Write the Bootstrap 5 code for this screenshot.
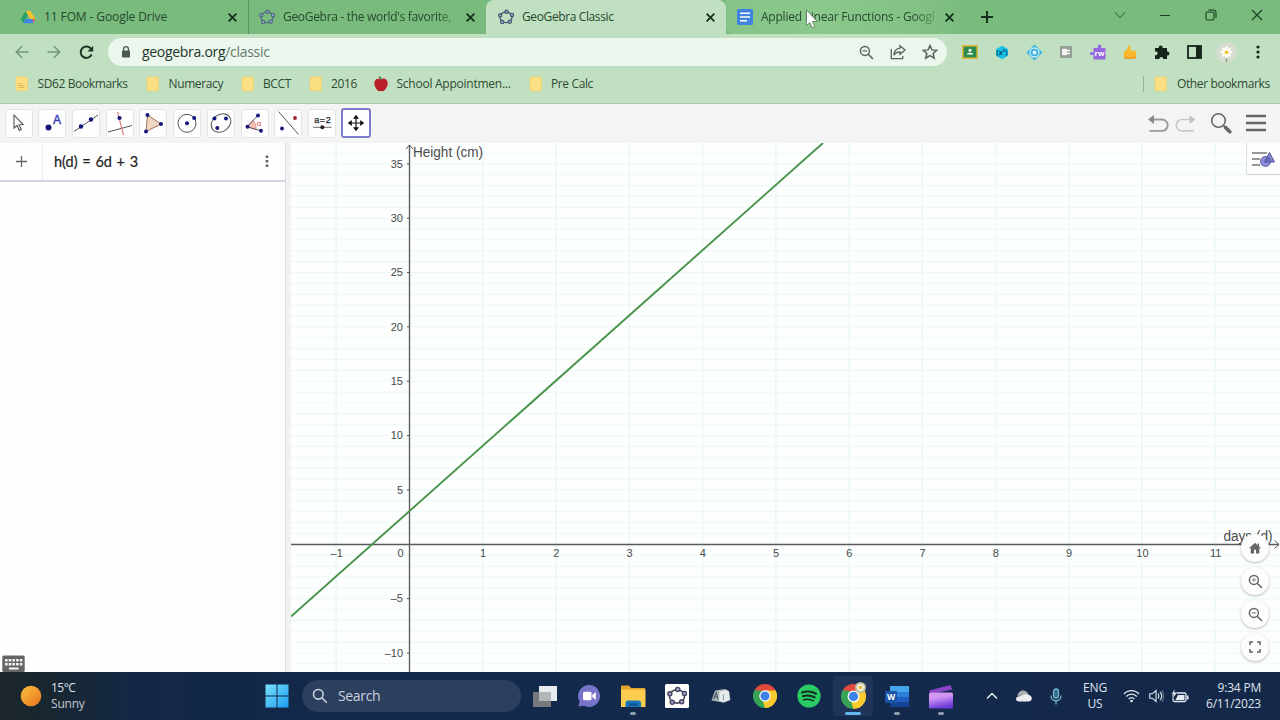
<!DOCTYPE html>
<html lang="en">
<head>
<meta charset="utf-8">
<meta name="viewport" content="width=device-width, initial-scale=1">
<title>GeoGebra Classic</title>
<link href="https://cdn.jsdelivr.net/npm/bootstrap@5.3.0/dist/css/bootstrap.min.css" rel="stylesheet">
<style>
body{width:1280px;height:720px;overflow:hidden;font-family:"Open Sans","Noto Sans",sans-serif;font-size:12px;line-height:16px;color:#2f4a36;background:#fdfefe}
svg{display:block;flex:none}
.tabstrip{height:34px;background:#78bb7c;padding-left:8px}
.tab{height:34px;padding:0 10px 0 12px;flex:none;color:#27492f}
.tab .ttl{flex:1;margin-left:8px;white-space:nowrap;letter-spacing:-.38px}
.tab .ttl.first{letter-spacing:-.1px}
.tab .ttl.long{letter-spacing:-.31px}
.tab .ttl.docs{letter-spacing:-.22px}
.t1{width:240px}.t2{width:238px;border-left:1px solid #5c9763}
.t3{width:240px;background:#c1e0c1;border-radius:8px 8px 0 0}
.t4{width:239px;background:linear-gradient(90deg,#85c487,#8bc88c 40%,#7fc082 90%,#78bb7c);border-radius:0 0 0 8px;padding-left:11px}
.fade-r{-webkit-mask-image:linear-gradient(90deg,#000 88%,rgba(0,0,0,.35) 98%);mask-image:linear-gradient(90deg,#000 88%,rgba(0,0,0,.35) 98%)}
.slot{flex:none;display:flex;align-items:center;justify-content:center}
.w32{width:32px}
.addressbar{height:36px;background:#c1e0c1;padding:0 6px}
.omni{width:839px;height:28px;border-radius:14px;background:#ebf6ed;margin-left:6px;margin-right:7px;padding-left:11px;font-size:14px;letter-spacing:-.3px;color:#63786a}
.omni b{font-weight:400;color:#22352a}
.bookmarks{height:33px;background:#c1e0c1;padding:0 10px 0 14px}
.bm{flex:none;gap:7.5px;height:28px;white-space:nowrap;letter-spacing:-.38px}
.ggbar{height:40px;background:#f4f4f4;border-top:1px solid #a9c8aa;padding:0 0 1px 4.5px}
.tool{width:28px;height:29px;background:#fefefe;border:1px solid #e4e4e6;border-radius:3px;margin-right:5.72px}
.tool.on{width:30px;height:30px;border:2px solid #7f7dcb;margin-left:-.5px}
.work{height:529px}
.alg{width:286px;background:#fefefe;border-right:1px solid #dcdcdc}
.algrow{height:39px;border-bottom:2px solid #d4d2e4}
.pluscell{width:43px;border-right:1px solid #ebebee;height:37px}
.formula{font-family:Lato,"Open Sans",sans-serif;font-size:14.5px;word-spacing:1px;color:#222;-webkit-text-stroke:.2px #222}
.split{width:5px;background:#f1f1f1}
.plot{width:989px;height:529px;overflow:hidden}
.plot text{font-family:"Liberation Sans",Arial,sans-serif;font-size:11px;fill:#4a4a4a}
.plot text.axis{font-size:14px;fill:#4c4c4c}
.stylebtn{position:absolute;right:0;top:0;width:34px;height:32px;background:#fdfdfd;border-left:1px solid #ddd;border-bottom:1px solid #ccc;border-radius:0 0 0 3px}
.views{position:absolute;right:11px;top:391px;gap:5px}
.rnd{width:28px;height:28px;border-radius:50%;background:#fdfdfd;box-shadow:0 1px 2.5px rgba(0,0,0,.28)}
.kbd{position:absolute;left:2px;bottom:0}
.taskbar{height:48px;background:linear-gradient(90deg,#1d252a 0,#18262f 45px,#142845 130px,#122849 250px,#132a4d 560px,#142849 100%);color:#dfe5ee}
.tight{letter-spacing:-.2px}
.srch{width:219px;height:32px;border-radius:16px;background:#2c3f5f;font-size:14px;letter-spacing:-.35px;color:#ccd3df;padding-left:10px;gap:10px}
.app{width:44px;height:48px;position:relative;flex:none}
.app.run:after{content:"";position:absolute;left:19px;bottom:5px;width:6px;height:3px;border-radius:2px;background:#8f9bae}
.app.cur:before{content:"";position:absolute;left:2px;top:4px;width:40px;height:40px;border-radius:4px;background:#20345a}
.app.cur:after{content:"";position:absolute;left:14px;bottom:5px;width:16px;height:3px;border-radius:2px;background:#64b5ee}
.app svg{position:relative}
.pointer{position:absolute;left:805px;top:9px}
</style>
</head>
<body>
<svg width="0" height="0" class="position-absolute">
<defs>
<symbol id="geo" viewBox="0 0 24 24"><ellipse cx="12" cy="12.5" rx="9" ry="8" fill="none" stroke="currentColor" stroke-width="1.9"/><g fill="#9b9fce" stroke="currentColor" stroke-width="1.6"><circle cx="12.8" cy="4.2" r="2.5"/><circle cx="21" cy="9" r="2.5"/><circle cx="17.6" cy="19" r="2.5"/><circle cx="6.3" cy="19.6" r="2.5"/><circle cx="3.4" cy="9.4" r="2.5"/></g></symbol>
<symbol id="x" viewBox="0 0 10 10"><path d="M1.5 1.5 8.5 8.5M8.5 1.5 1.5 8.5" stroke="#14301c" stroke-width="1.7"/></symbol>
<symbol id="folder" viewBox="0 0 16 16"><path d="M3 1h9.500a1 1 0 0 1 1 1v9.300l-.8.6.8.7v1.200a1 1 0 0 1-1 1H3a1 1 0 0 1-1-1V2a1 1 0 0 1 1-1z" fill="#fbdf83" stroke="#efcd6a" stroke-width=".7"/></symbol>
<symbol id="chrome" viewBox="0 0 24 24"><path d="M12 12 1.600 6A12 12 0 0 1 22.400 6z" fill="#df4a3d"/><path d="M12 12 22.400 6A12 12 0 0 1 12 24z" fill="#fbcb2e"/><path d="M12 12v12A12 12 0 0 1 1.600 6z" fill="#35a353"/><path d="M12 6.300h10.600L17 15z" fill="#fbcb2e"/><path d="M12 6.300h10.600L22.300 6 12 4z" fill="#df4a3d"/><path d="m17 15-5 9-2-6z" fill="#fbcb2e"/><path d="M7 15 1.600 6 9 7z" fill="#35a353"/><circle cx="12" cy="12" r="5.700" fill="#fff"/><circle cx="12" cy="12" r="4.500" fill="#3e82e8"/></symbol>
<symbol id="mag" viewBox="0 0 16 16"><g fill="none" stroke="currentColor" stroke-width="1.600"><circle cx="6.300" cy="6.300" r="4.800"/><path d="m9.800 9.800 5 5"/></g></symbol>
</defs>
</svg>

<header>
<div class="tabstrip d-flex align-items-center position-relative">
  <div class="tab t1 d-flex align-items-center">
    <svg width="16" height="16" viewBox="0 0 16 16"><path d="M5.500 2h5L8 6.300 3.200 14 .7 9.900z" fill="#25a266"/><path d="M5.500 2h5l4.900 8h-5z" fill="#fbc22c"/><path d="M3.200 14.300 5.600 10h9.800L13 14.300z" fill="#4286ec"/><path d="M12.700 10h2.700L13 14.300z" fill="#de6047"/></svg>
    <span class="ttl first">11 FOM - Google Drive</span><svg width="11" height="11"><use href="#x"/></svg>
  </div>
  <div class="tab t2 d-flex align-items-center">
    <svg width="16" height="16" style="color:#4a6c80;margin-left:-2px"><use href="#geo"/></svg>
    <span class="ttl long fade-r me-2">GeoGebra - the world's favorite,</span><svg width="11" height="11"><use href="#x"/></svg>
  </div>
  <div class="tab t3 d-flex align-items-center">
    <svg width="16" height="16" style="color:#45556c"><use href="#geo"/></svg>
    <span class="ttl">GeoGebra Classic</span><svg width="11" height="11"><use href="#x"/></svg>
  </div>
  <div class="tab t4 d-flex align-items-center">
    <svg width="16" height="16" viewBox="0 0 16 16"><rect width="16" height="16" rx="1.500" fill="#4083df"/><path d="M3 4.200h10M3 8h10M3 11.800h7" stroke="#fff" stroke-width="1.500"/></svg>
    <span class="ttl docs fade-r me-2">Applied Linear Functions - Googl</span><svg width="11" height="11"><use href="#x"/></svg>
  </div>
  <span class="slot" style="width:44px"><svg width="12" height="12" viewBox="0 0 12 12"><path d="M6 0v12M0 6h12" stroke="#12301a" stroke-width="2"/></svg></span>
  <div class="ms-auto d-flex pb-1">
    <span class="slot" style="width:45px"><svg width="12" height="12" viewBox="0 0 12 12" fill="none" stroke="#2e5737"><path d="m1 3.500 5 5 5-5"/></svg></span>
    <span class="slot" style="width:46px"><svg width="12" height="12" viewBox="0 0 12 12"><path d="M1 6.500h10" stroke="#173a20"/></svg></span>
    <span class="slot" style="width:46px"><svg width="12" height="12" viewBox="0 0 12 12" fill="none" stroke="#173a20" stroke-width="1.100"><rect x="1" y="3" width="8" height="8" rx="1.500"/><path d="M3.300 1h5.200a2.500 2.500 0 0 1 2.500 2.500v5.200"/></svg></span>
    <span class="slot" style="width:46px"><svg width="12" height="12" viewBox="0 0 12 12"><path d="m1 1 10 10M11 1 1 11" stroke="#173a20" stroke-width="1.100"/></svg></span>
  </div>
  <svg class="pointer" width="14" height="20" viewBox="0 0 14 20"><path d="M1.500 1v15.500l3.400-3 2.300 5.300 2.500-1.100-2.300-5.200h4.900z" fill="#fff" stroke="#54785a" stroke-width=".8"/></svg>
</div>

<div class="addressbar d-flex align-items-center">
  <span class="slot w32"><svg width="14" height="14" viewBox="0 0 14 14" fill="none" stroke="#71967a" stroke-width="1.500"><path d="M13.500 7H1.500M7 1.300 1.300 7 7 12.700"/></svg></span>
  <span class="slot w32"><svg width="14" height="14" viewBox="0 0 14 14" fill="none" stroke="#71967a" stroke-width="1.500"><path d="M.5 7h12M7 1.300 12.700 7 7 12.700"/></svg></span>
  <span class="slot w32"><svg width="15" height="15" viewBox="0 0 15 15"><path d="M12.600 9.500A5.700 5.700 0 1 1 12 3.800" fill="none" stroke="#1d3525" stroke-width="2"/><path d="M14.200.8V6.500H8.500z" fill="#1d3525"/></svg></span>
  <div class="omni d-flex align-items-center">
    <svg width="14" height="14" viewBox="0 0 14 14"><rect x="3" y="5.500" width="8" height="7" rx=".8" fill="#4b5a51"/><path d="M4.600 6V4a2.400 2.400 0 0 1 4.800 0v2" fill="none" stroke="#4b5a51" stroke-width="1.300"/></svg>
    <span style="margin-left:9px"><b>geogebra.org</b>/classic</span>
    <div class="ms-auto d-flex" style="margin-right:1px;color:#55645b">
      <span class="slot w32"><svg width="15" height="15" viewBox="0 0 16 16"><use href="#mag"/><path d="M4 6.300h4.600" stroke="currentColor" stroke-width="1.300"/></svg></span>
      <span class="slot w32"><svg width="16" height="16" viewBox="0 0 16 16" fill="none" stroke="currentColor" stroke-width="1.300"><path d="M1.300 5v9.700h11.400V12"/><path d="M10 1.700 15 6l-5 4.300V8C6.800 8 5 9 3.800 11.300 4.100 7.300 6 4.500 10 4.100z"/></svg></span>
      <span class="slot w32"><svg width="16" height="16" viewBox="0 0 16 16" fill="none" stroke="currentColor" stroke-width="1.500"><path d="m8 1.500 1.900 4.400 4.800.4-3.600 3.200 1.100 4.700L8 11.700l-4.200 2.500 1.100-4.700L1.300 6.300l4.800-.4z"/></svg></span>
    </div>
  </div>
  <span class="slot w32"><svg width="16" height="16" viewBox="0 0 16 16"><rect x=".8" y="1.800" width="14.400" height="12.400" fill="#2d8a4e" stroke="#dbb83a" stroke-width="1.600"/><circle cx="8" cy="6.300" r="1.500" fill="#fff"/><path d="M4.500 10.500c1-2.300 6-2.300 7 0z" fill="#fff"/></svg></span>
  <span class="slot w32"><svg width="14" height="15" viewBox="0 0 14 15"><path d="m7 .8 6 3.400v6.600l-6 3.400-6-3.400V4.200z" fill="#16bfe6"/><text x="7" y="10" font-size="7" font-weight="700" fill="#0b4c72" text-anchor="middle">(x²)</text></svg></span>
  <span class="slot w32"><svg width="17" height="17" viewBox="0 0 17 17"><path d="m8.500.5 8 8-8 8-8-8z" fill="#3cb1e0"/><circle cx="8.500" cy="8.500" r="4.500" fill="none" stroke="#c6ecfa" stroke-width="1.300"/><circle cx="8.500" cy="8.500" r="2" fill="#e2f8ff"/></svg></span>
  <span class="slot w32"><svg width="12" height="12" viewBox="0 0 12 12"><rect width="12" height="12" rx="1" fill="#94a096"/><rect x="2" y="2.800" width="5" height="6.400" rx="1" fill="#f6f6f6"/><path d="M7 4.500h3M7 7.500h3" stroke="#fff" stroke-width="1.300"/></svg></span>
  <span class="slot w32"><svg width="18" height="18" viewBox="0 0 18 18"><path d="M4.500 5H9c-1-2 0-3.500 1.500-3.500S13 3 12 5h4.500v11.500h-12v-5c-2 1-3.500.5-3.500-1s1.500-2 3.500-1z" fill="#9566e0"/><text x="10.500" y="13" text-anchor="middle" font-size="7.500" font-weight="700" fill="#fff">rw</text></svg></span>
  <span class="slot w32"><svg width="16" height="18" viewBox="0 0 16 18"><path d="M6.500 2.500c1.800-.8 2.500 1.500 2 5h3c2 0 3 1 2.700 3 .4 2-.3 5-2 5.500H3.500C1.500 15.500 1 9.500 2.500 8 5 7.500 5.800 5.500 6.500 2.500z" fill="#f8b72c"/><path d="M2 13c3 2 8.500 2 12 0-.3 2-1 3-2 3H4c-1 0-1.800-2-2-3z" fill="#eda023"/></svg></span>
  <span class="slot w32"><svg width="16" height="16" viewBox="0 0 16 16"><path d="M1 4h3.800a2 2 0 1 1 3.800 0H13v3.600a2 2 0 1 1 0 3.900V15H9.300a2 2 0 1 0-4 0H1v-3.800a2 2 0 1 0 0-3.800z" fill="#17241b"/></svg></span>
  <span class="slot w32"><svg width="15" height="14" viewBox="0 0 15 14"><rect x="1" y="1" width="13" height="12" fill="none" stroke="#17241b" stroke-width="1.800"/><path d="M9 1h5v12H9z" fill="#17241b"/></svg></span>
  <span class="slot w32"><svg width="21" height="21" viewBox="0 0 21 21"><circle cx="10.500" cy="10.500" r="10.300" fill="#d6dcd0"/><path d="M10.500 11v9" stroke="#839f67" stroke-width="1.300"/><g stroke="#fffff6" stroke-width="2.600" stroke-linecap="round"><path d="M10.500 5.500v9.500M5.800 10.300h9.400M7.200 7l6.600 6.600M13.800 7l-6.600 6.600"/></g><circle cx="10.500" cy="10.300" r="1.900" fill="#efc436"/></svg></span>
  <span class="slot w32"><svg width="4" height="14" viewBox="0 0 4 14" fill="#17241b"><circle cx="2" cy="2" r="1.600"/><circle cx="2" cy="7" r="1.600"/><circle cx="2" cy="12" r="1.600"/></svg></span>
</div>

<nav class="bookmarks d-flex align-items-start">
  <span class="bm d-flex align-items-center" style="width:131px"><svg width="16" height="16" viewBox="0 0 16 16"><use href="#folder"/><path d="M4.500 7.500h3.500M4.500 9.500h6M4.500 11.500h6" stroke="#d9b04c" stroke-width=".9"/></svg><span>SD62 Bookmarks</span></span>
  <span class="bm d-flex align-items-center" style="width:94.500px"><svg width="16" height="16"><use href="#folder"/></svg><span>Numeracy</span></span>
  <span class="bm d-flex align-items-center" style="width:68px"><svg width="16" height="16"><use href="#folder"/></svg><span>BCCT</span></span>
  <span class="bm d-flex align-items-center" style="width:65.500px"><svg width="16" height="16"><use href="#folder"/></svg><span>2016</span></span>
  <span class="bm d-flex align-items-center" style="width:154.500px"><svg width="16" height="16" viewBox="0 0 16 16"><path d="M8 3.800C12-.2 16.500 5 14 10.500 12 15 10 15.500 8 15c-2 .5-4 0-6-4.500C-.5 5 4 .8 8 3.800z" fill="#b9202a"/><path d="M8 4C8 2 6.500 1.500 6.500.5" stroke="#3e5a24" stroke-width="1.400" fill="none"/></svg><span style="letter-spacing:-.25px">School Appointmen...</span></span>
  <span class="bm d-flex align-items-center"><svg width="16" height="16"><use href="#folder"/></svg><span>Pre Calc</span></span>
  <span class="bm d-flex align-items-center ms-auto"><i style="width:1px;height:16px;background:#95b398"></i><svg width="16" height="16" style="margin-left:1.500px;margin-right:.5px"><use href="#folder"/></svg><span style="width:93px">Other bookmarks</span></span>
</nav>

<div class="ggbar d-flex align-items-center">
  <span class="tool slot"><svg width="26" height="26" viewBox="0 0 26 26"><path d="M8 5v13l3-2.500 2.300 5 2-.9-2.300-4.900 4.200-.2z" fill="#fff" stroke="#555" stroke-width="1.100"/></svg></span>
  <span class="tool slot"><svg width="26" height="26" viewBox="0 0 26 26"><circle cx="9.500" cy="17.500" r="3" fill="#15157c"/><text x="14" y="13.700" font-family="Liberation Sans" font-size="12" fill="#3a3ab8" stroke="#3a3ab8" stroke-width=".4">A</text></svg></span>
  <span class="tool slot"><svg width="26" height="26" viewBox="0 0 26 26"><path d="M1 21.500 25 5" stroke="#555"/><g fill="#15157c"><circle cx="8" cy="16.500" r="2.200"/><circle cx="18" cy="9.500" r="2.200"/></g></svg></span>
  <span class="tool slot"><svg width="26" height="26" viewBox="0 0 26 26"><path d="m1 22 24-6.500" stroke="#555"/><path d="m10.500 2 6 23" stroke="#d77b70" stroke-width="1.100"/><circle cx="12.500" cy="8" r="2.100" fill="#15157c"/></svg></span>
  <span class="tool slot"><svg width="26" height="26" viewBox="0 0 26 26"><path d="m7.500 5 13.500 9L6 21.500z" fill="#efd7c4" stroke="#9d7156"/><g fill="#15157c"><circle cx="7.500" cy="5" r="2"/><circle cx="21" cy="14" r="2"/><circle cx="6" cy="21.500" r="2"/></g></svg></span>
  <span class="tool slot"><svg width="26" height="26" viewBox="0 0 26 26"><circle cx="13" cy="13.300" r="9" fill="none" stroke="#555"/><g fill="#15157c"><circle cx="13" cy="13.300" r="2"/><circle cx="20.200" cy="8" r="2"/></g></svg></span>
  <span class="tool slot"><svg width="26" height="26" viewBox="0 0 26 26"><ellipse cx="13" cy="13" rx="10.500" ry="8.500" transform="rotate(-38 13 13)" fill="none" stroke="#555"/><g fill="#15157c"><circle cx="6.500" cy="8.500" r="2"/><circle cx="18" cy="8.500" r="2"/><circle cx="9.300" cy="18" r="2"/></g></svg></span>
  <span class="tool slot"><svg width="26" height="26" viewBox="0 0 26 26"><path d="M5 16.800 11 10.500a9 9 0 0 1 3 8.800z" fill="#f6c2b8" stroke="#df8377" stroke-width=".8"/><path d="M16 5.500 5 16.800 19 20.800" fill="none" stroke="#555"/><text x="14.700" y="15.800" font-size="7.500" fill="#cf4a40">α</text><g fill="#15157c"><circle cx="16" cy="5.500" r="2"/><circle cx="5.500" cy="16.800" r="2"/><circle cx="19" cy="20.800" r="2"/></g></svg></span>
  <span class="tool slot"><svg width="26" height="26" viewBox="0 0 26 26"><path d="m3.500 1.500 20 23" stroke="#555"/><circle cx="7" cy="18.500" r="1.900" fill="#15157c"/><circle cx="20" cy="8" r="1.900" fill="#a0202b"/></svg></span>
  <span class="tool slot"><svg width="26" height="26" viewBox="0 0 26 26"><text x="13.500" y="12.500" text-anchor="middle" font-size="9" textLength="16.500" fill="#222" stroke="#222" stroke-width=".25" font-family="Liberation Sans">a=2</text><path d="M4 17.300h18.500" stroke="#777" stroke-width="1.100"/><circle cx="13.300" cy="17.300" r="2" fill="#222"/></svg></span>
  <span class="tool on slot"><svg width="26" height="26" viewBox="0 0 26 26"><path d="M13 7v12M7 13h12" stroke="#111" stroke-width="1.200"/><path d="m13 4.800 3 4h-6zM13 21.200l3-4h-6zM4.800 13l4-3v6zM21.200 13l-4-3v6z" fill="#111"/></svg></span>
  <div class="ms-auto d-flex align-items-center">
    <span class="slot" style="width:28px"><svg width="22" height="19" viewBox="0 0 22 19" fill="none" stroke="#999" stroke-width="1.900"><path d="M5.500 5.500H15a5.700 5.700 0 0 1 0 11.400H2.500"/><path d="M7 1 1 5.500 7 10z" fill="#888" stroke="none"/></svg></span>
    <span class="slot" style="width:28px"><svg width="22" height="19" viewBox="0 0 22 19" fill="none" stroke="#c9c9c9" stroke-width="1.700"><path d="M15.500 5.500H7a5.700 5.700 0 0 0 0 11.400h12"/><path d="M14.500 1 20.500 5.500 14.500 10z" fill="#c2c2c2" stroke="none"/></svg></span>
    <span class="slot" style="width:42px"><svg width="22" height="22" viewBox="0 0 22 22" fill="none" stroke="#666"><circle cx="8.500" cy="8.500" r="6.800" stroke-width="1.600"/><path d="m13.300 13.300 2.500 2.500" stroke-width="1.500"/><path d="m15.500 15.500 4.300 4.300" stroke-width="3.600" stroke-linecap="round"/></svg></span>
    <span class="slot" style="width:28px;margin-right:10px"><svg width="20" height="18" viewBox="0 0 20 18"><path d="M0 2h20M0 9h20M0 16h20" stroke="#666" stroke-width="2.400"/></svg></span>
  </div>
</div>
</header>

<main class="work d-flex position-relative">
  <aside class="alg position-relative">
    <div class="algrow d-flex align-items-center">
      <span class="pluscell slot"><svg width="11" height="11" viewBox="0 0 11 11"><path d="M5.500 0v11M0 5.500h11" stroke="#666" stroke-width="1.300"/></svg></span>
      <span class="formula" style="margin-left:11px">h(d) = 6d + 3</span>
      <span class="slot ms-auto" style="width:37px"><svg width="4" height="13" viewBox="0 0 4 13" fill="#666"><path d="M.7.500h2.600v2.600H.7zM.7 5h2.600v2.600H.7zM.7 9.500h2.600v2.600H.7z"/></svg></span>
    </div>
    <svg class="kbd" width="23" height="17" viewBox="0 0 23 17"><rect x=".3" y=".5" width="22.400" height="16.500" rx="1.500" fill="#656565"/><path d="M3 5.200h17.500M3 9.200h17.500" stroke="#f4f4f4" stroke-width="2.400" stroke-dasharray="2.600 1.100"/><path d="M7 13.500h9.500" stroke="#f4f4f4" stroke-width="2"/></svg>
  </aside>
  <div class="split"></div>
  <svg class="plot" viewBox="291 143 989 529">
    <g id="grid" stroke="#edf9f7" stroke-width="1.200"></g>
    <path d="M291 544.500h988M409.500 672V145" stroke="#5a5a5a" stroke-width="1.300"/>
    <path d="m1274.500 540.500 4.500 4-4.500 4M406 149l3.500-4 3.500 4" fill="none" stroke="#555"/>
    <g id="labels"></g>
    <text class="axis" x="413" y="157" textLength="70" lengthAdjust="spacingAndGlyphs">Height (cm)</text>
    <text class="axis" x="1223.500" y="541" textLength="49" lengthAdjust="spacingAndGlyphs">days (d)</text>
    <path d="M291 616.500 823 143" stroke="#4a944a" stroke-width="1.900"/>
  </svg>
  <div class="stylebtn d-flex align-items-center justify-content-end"><svg width="28" height="22" viewBox="0 0 28 22"><path d="M0 5h15M0 11h8M0 17h8" stroke="#777" stroke-width="1.700"/><circle cx="13.500" cy="13.500" r="5" fill="#8d8dd8" stroke="#6363b5"/><path d="M17.500 4.500 22.500 14H12.500z" fill="#6262b5" fill-opacity=".75" stroke="#5050a0"/></svg></div>
  <div class="views d-flex flex-column">
    <span class="rnd slot"><svg width="12" height="12" viewBox="0 0 12 12"><path d="M6 .8 0 6.300h1.700V11.500H5V7.800h2v3.700h3.300V6.300H12L10 4.500V1.500H8.700v1.800z" fill="#666"/></svg></span>
    <span class="rnd slot" style="color:#666"><svg width="15" height="15" viewBox="0 0 16 16"><use href="#mag"/><path d="M4.200 6.300h4.200M6.300 4.200v4.200" stroke="currentColor" stroke-width=".8"/></svg></span>
    <span class="rnd slot" style="color:#666"><svg width="15" height="15" viewBox="0 0 16 16"><use href="#mag"/><path d="M4.200 6.300h4.200" stroke="currentColor" stroke-width="1"/></svg></span>
    <span class="rnd slot"><svg width="12" height="12" viewBox="0 0 12 12"><path d="M1 4V1h3M8 1h3v3M11 8v3H8M4 11H1V8" fill="none" stroke="#666" stroke-width="1.600"/></svg></span>
  </div>
</main>

<footer class="taskbar d-flex align-items-center">
  <svg width="22" height="22" viewBox="0 0 22 22" style="margin-left:20px"><defs><linearGradient id="sun" x2="1" y2="1"><stop stop-color="#fbc13e"/><stop offset="1" stop-color="#e8731d"/></linearGradient></defs><circle cx="11" cy="11" r="10.300" fill="url(#sun)"/></svg>
  <div class="tight" style="width:206px;margin-left:9px"><div style="letter-spacing:-.5px">15°C</div><div style="color:#c2c7cf">Sunny</div></div>
  <span class="slot" style="width:40px"><svg width="24" height="24" viewBox="0 0 24 24"><defs><linearGradient id="win" gradientUnits="userSpaceOnUse" x2="24" y2="24"><stop stop-color="#79e2fb"/><stop offset="1" stop-color="#1b9cf0"/></linearGradient></defs><path d="M.5.500h11v11H.500zM12.500.500h11v11h-11zM.5 12.500h11v11H.500zM12.500 12.500h11v11h-11z" fill="url(#win)"/></svg></span>
  <div class="srch d-flex align-items-center" style="margin-left:5px"><svg width="16" height="16" viewBox="0 0 16 16"><use href="#mag"/></svg><span>Search</span></div>
  <div class="d-flex" style="margin-left:2px">
    <span class="app slot"><svg width="24" height="23" viewBox="0 0 24 23"><path d="M0 7h18v15H0z" fill="#77797b"/><path d="M6 1h18v15H6z" fill="#e9ecef"/><path d="M6 7h12v9H6z" fill="#b4b7ba"/></svg></span>
    <span class="app slot"><svg width="24" height="24" viewBox="0 0 24 24"><path d="M12 1a11 11 0 1 1-5 20.800L1.500 22.500 2.500 17.500A11 11 0 0 1 12 1z" fill="#7774c9"/><rect x="6" y="7.800" width="8.500" height="8.500" rx="1.500" fill="#fff"/><path d="m15.300 10.800 3.500-2.500v7.500l-3.500-2.500z" fill="#fff"/></svg></span>
    <span class="app run slot"><svg width="26" height="24" viewBox="0 0 26 24"><path d="M1 1.500h8l2 2.500h14v18.500H1z" fill="#e2a42c"/><path d="M1 5.500h24.500v17.500H1z" fill="#fbcd50"/><path d="M5.500 23v-4a2.500 2.500 0 0 1 2.500-2.500h10.500a2.500 2.500 0 0 1 2.500 2.500v4z" fill="#1775b9"/><path d="M9 20.500h8.500" stroke="#115187" stroke-width="2"/></svg></span>
    <span class="app slot"><svg width="24" height="24" viewBox="0 0 24 24" style="color:#45455c"><rect width="24" height="24" rx="1.500" fill="#fff"/><use href="#geo" x="2" y="2" width="20" height="20"/></svg></span>
    <span class="app slot"><svg width="20" height="16" viewBox="0 0 20 16"><path d="m4 2.500 10-1.500 4 2 1.500 9-7 2.500L.5 12.500z" fill="#aeb9bd"/><path d="m8.500 3.500 7-1.500 2.500 2 .5 8-6 2.500-4.500-2z" fill="#e6ebec"/><path d="m2.500 11.500 2.800-7 1.700 7M3.500 9h3" fill="none" stroke="#4f5c66" stroke-width="1.100"/><path d="M12.500 6.500v6" stroke="#8b979d"/></svg></span>
    <span class="app slot"><svg width="24" height="24"><use href="#chrome"/></svg></span>
    <span class="app slot"><svg width="24" height="24" viewBox="0 0 24 24"><circle cx="12" cy="12" r="11.600" fill="#2acb63"/><g fill="none" stroke="#122d23" stroke-linecap="round"><path d="M5 8.500c4.500-1.500 10-1 14 1.200" stroke-width="2.200"/><path d="M5.800 12.200c4-1.200 8.500-.7 12 1.200" stroke-width="1.900"/><path d="M6.500 15.700c3.500-1 7-.6 10 1.100" stroke-width="1.500"/></g></svg></span>
    <span class="app cur slot"><svg width="27" height="28" viewBox="0 0 27 28"><use href="#chrome" x="1" y="2" width="25" height="25"/><circle cx="20.500" cy="5.500" r="5.500" fill="#b8b99b"/><path d="M20.500 1.500v8M16.500 5.500h8M17.700 2.700l5.600 5.600M23.300 2.700l-5.600 5.600" stroke="#f6f3dd" stroke-width="1.900"/><circle cx="20.500" cy="5.500" r="1.800" fill="#e6bc37"/></svg></span>
    <span class="app run slot"><svg width="24" height="23" viewBox="0 0 24 23"><path d="M5 1h19v6H5z" fill="#45a5ec"/><path d="M5 7h19v5H5z" fill="#2b7fd9"/><path d="M5 12h19v5H5z" fill="#1d5fc0"/><path d="M5 17h19v5H5z" fill="#164293"/><rect y="6" width="12" height="12" rx="1" fill="#1b53a6"/><text x="6" y="15" text-anchor="middle" font-size="8.500" font-weight="700" fill="#fff">W</text></svg></span>
    <span class="app run slot"><svg width="26" height="25" viewBox="0 0 26 25"><defs><linearGradient id="clip" x2=".3" y2="1"><stop stop-color="#d79cf2"/><stop offset=".4" stop-color="#cf94f3"/><stop offset="1" stop-color="#6d3bd9"/></linearGradient></defs><path d="m1 6.500 21.500-5.500 1.700 4.500L3 10z" fill="#8a45c5"/><rect x="1" y="8.500" width="24" height="16" rx="1.500" fill="url(#clip)"/></svg></span>
  </div>
  <div class="d-flex align-items-center ms-auto" style="height:48px">
    <span class="slot w32"><svg width="12" height="8" viewBox="0 0 12 8" fill="none" stroke="#e5eaf0" stroke-width="1.500"><path d="m1 6.500 5-5 5 5"/></svg></span>
    <span class="slot w32"><svg width="18" height="12" viewBox="0 0 18 12"><path d="M2.500 6C3-.5 12-1.500 13.500 5z" fill="#a9adb2"/><path d="M4 11.500C0 11.500 0 6.500 4.300 6.300 8 5 9 3.500 12.500 4.500c3 .5 4.300 2 4.300 4 0 2-1.500 3-3.500 3z" fill="#ecedef"/></svg></span>
    <span class="slot w32"><svg width="12" height="17" viewBox="0 0 12 17" fill="none" stroke="#74b6d0" stroke-width="1.300"><rect x="3.500" y="1" width="5" height="9" rx="2.500" fill="#356b8d"/><path d="M1 7.500c0 7 10 7 10 0M6 13v3.500"/></svg></span>
    <div class="text-center tight" style="width:46px">ENG<br>US</div>
    <span class="slot" style="width:27px"><svg width="17" height="14" viewBox="0 0 17 14" fill="none" stroke="#e5eaf0" stroke-width="1.300"><path d="M1 5c4-4.500 11-4.500 15 0M3.300 7.500c3-3.300 7.500-3.300 10.500 0M5.700 10c1.800-1.800 3.900-1.800 5.700 0"/><circle cx="8.500" cy="12" r="1.300" fill="#e5eaf0" stroke="none"/></svg></span>
    <span class="slot" style="width:22px"><svg width="15" height="14" viewBox="0 0 15 14" fill="none" stroke="#e5eaf0" stroke-width="1.100"><path d="M.800 4.800h2.500L7 1.500v11L3.300 9.200H.800zM9 4.500c1 1.500 1 3.500 0 5M11 2.800c2 2.500 2 6 0 8.400"/><path d="M12.800 1.300c2.200 3.300 2.200 8 0 11.400" opacity=".4"/></svg></span>
    <span class="slot" style="width:26px"><svg width="18" height="14" viewBox="0 0 18 14"><rect x="2" y="4" width="13" height="8.500" rx="1.500" fill="none" stroke="#e5eaf0" stroke-width="1.300"/><path d="M7 6h6.500v5h-9zM16 6.500h1.500v4H16z" fill="#e5eaf0"/><path d="M3.800 0 .5 5h2l-1 4.500L6 4H3.700z" fill="#fff" stroke="#142849" stroke-width=".5"/></svg></span>
    <div class="text-end tight" style="width:68px;margin-right:19px">9:34 PM<br>6/11/2023</div>
  </div>
</footer>

<script>
// Plot scale: origin in page pixels and pixels per unit on each axis.
const ox=409.5, oy=544.3, ux=73.25, uy=10.87, NS='http://www.w3.org/2000/svg';
const add=(parent,tag,attrs,txt)=>{const e=document.createElementNS(NS,tag);for(const k in attrs)e.setAttribute(k,attrs[k]);if(txt)e.textContent=txt;parent.appendChild(e)};
const grid=document.getElementById('grid'), labels=document.getElementById('labels');
for(let i=-11;i<=36;i++) add(grid,'path',{d:`M291 ${oy-i*uy}H1280`});
for(let i=-1;i<=11;i++){
  const x=ox+i*ux;
  add(grid,'path',{d:`M${x} 143V672`,'stroke-width':1.7});
  if(i) add(labels,'text',{x:x+.4,y:557.3,'text-anchor':'middle'},String(i).replace('-','–'));
}
add(labels,'text',{x:403.5,y:557.3,'text-anchor':'end'},'0');
for(let i=-10;i<=35;i+=5) if(i){
  const y=oy-i*uy;
  add(labels,'path',{d:`M407 ${y}h3`,stroke:'#555'});
  add(labels,'text',{x:403,y:y+3.8,'text-anchor':'end'},String(i).replace('-','–'));
}
</script>
<script src="https://cdn.jsdelivr.net/npm/bootstrap@5.3.0/dist/js/bootstrap.bundle.min.js"></script>
</body>
</html>
